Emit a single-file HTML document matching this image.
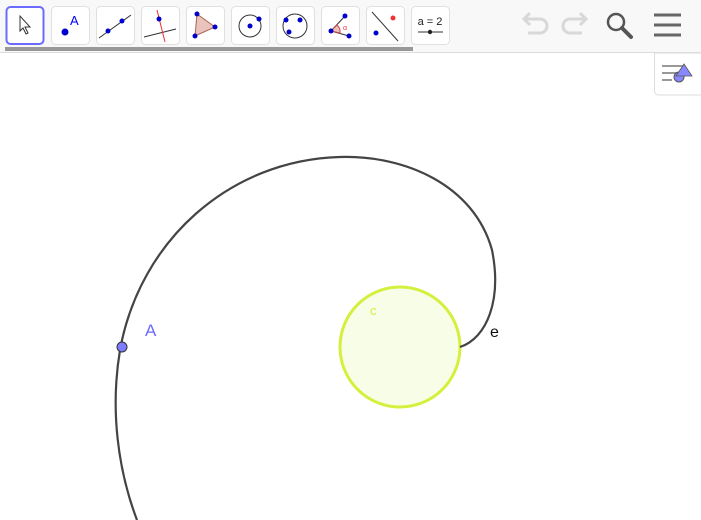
<!DOCTYPE html>
<html><head><style>
html,body{margin:0;padding:0;width:701px;height:520px;overflow:hidden;background:#fff;font-family:"Liberation Sans",sans-serif}
</style></head><body>
<svg width="701" height="520" style="position:absolute;left:0;top:0" xmlns="http://www.w3.org/2000/svg">
<rect x="0" y="0" width="701" height="52" fill="#f8f8f8"/>
<line x1="0" y1="52.5" x2="701" y2="52.5" stroke="#dcdcdc"/>
<rect x="5" y="47" width="408" height="4" fill="#999"/>
<g fill="#fff" stroke="#e0e0e0">
<rect x="51.5" y="6.5" width="38" height="38" rx="4"/>
<rect x="96.5" y="6.5" width="38" height="38" rx="4"/>
<rect x="141.5" y="6.5" width="38" height="38" rx="4"/>
<rect x="186.5" y="6.5" width="38" height="38" rx="4"/>
<rect x="231.5" y="6.5" width="38" height="38" rx="4"/>
<rect x="276.5" y="6.5" width="38" height="38" rx="4"/>
<rect x="321.5" y="6.5" width="38" height="38" rx="4"/>
<rect x="366.5" y="6.5" width="38" height="38" rx="4"/>
<rect x="411.5" y="6.5" width="38" height="38" rx="4"/>
</g>
<rect x="6.5" y="7" width="37" height="37" rx="4" fill="#fff" stroke="#6b6bff" stroke-width="2"/>
<path d="M20,16 L20,31 L23,28 L26,34 L28,33 L25,27 L30,27 Z" fill="#fff" stroke="#333" stroke-width="1"/>
<circle cx="65" cy="32" r="3.5" fill="#00c"/>
<text x="70" y="25" font-size="13" fill="#00f">A</text>
<line x1="99" y1="38" x2="131" y2="15" stroke="#333"/>
<circle cx="108" cy="31" r="2.5" fill="#00c"/><circle cx="122" cy="21" r="2.5" fill="#00c"/>
<line x1="144" y1="37" x2="176" y2="29" stroke="#333"/>
<line x1="157" y1="10" x2="165" y2="42" stroke="#e33"/>
<circle cx="159" cy="19" r="2.5" fill="#00c"/>
<polygon points="197,14 215,27 195,36" fill="#e8c4bc" stroke="#b06050"/>
<circle cx="197" cy="14" r="2.5" fill="#00c"/><circle cx="215" cy="27" r="2.5" fill="#00c"/><circle cx="195" cy="36" r="2.5" fill="#00c"/>
<circle cx="250" cy="26" r="11" fill="none" stroke="#333"/>
<circle cx="250" cy="26" r="2.5" fill="#00c"/><circle cx="259" cy="19" r="2.5" fill="#00c"/>
<ellipse cx="295" cy="26" rx="12" ry="12" fill="none" stroke="#333"/>
<circle cx="286" cy="20" r="2.5" fill="#00c"/><circle cx="300" cy="20" r="2.5" fill="#00c"/><circle cx="289" cy="32" r="2.5" fill="#00c"/>
<path d="M331,31 L345,16 M331,31 L349,36" stroke="#333" fill="none"/>
<path d="M331,31 L337,25 A9,9 0 0 1 340,33 Z" fill="#e8c4bc" stroke="#c44"/>
<text x="343" y="30" font-size="7" fill="#e33">α</text>
<circle cx="345" cy="16" r="2.5" fill="#00c"/><circle cx="331" cy="31" r="2.5" fill="#00c"/><circle cx="349" cy="36" r="2.5" fill="#00c"/>
<line x1="372" y1="12" x2="398" y2="41" stroke="#333"/>
<circle cx="393" cy="18" r="2.5" fill="#e33"/><circle cx="376" cy="33" r="2.5" fill="#00c"/>
<text x="430" y="25" font-size="11" fill="#222" text-anchor="middle">a = 2</text>
<line x1="418" y1="32" x2="443" y2="32" stroke="#333"/>
<circle cx="430" cy="32" r="2.2" fill="#222"/>
<g fill="none" stroke="#d8d8d8" stroke-width="3">
<path d="M526,19 H540 A7,7 0 0 1 540,33 H528"/>
<path d="M530,13 L524,19 L530,25"/>
<path d="M584,19 H570 A7,7 0 0 0 570,33 H582"/>
<path d="M580,13 L586,19 L580,25"/>
</g>
<circle cx="616" cy="22" r="8" fill="none" stroke="#555" stroke-width="2.5"/>
<line x1="622" y1="28" x2="631" y2="37" stroke="#555" stroke-width="4" stroke-linecap="round"/>
<g stroke="#666" stroke-width="3"><line x1="654" y1="15" x2="681" y2="15"/><line x1="654" y1="25" x2="681" y2="25"/><line x1="654" y1="35" x2="681" y2="35"/></g>
<path d="M701,53 H654.5 V91 a4,4 0 0 0 4,4 H701" fill="#fff" stroke="#ddd"/>
<g stroke="#999" stroke-width="2"><line x1="662" y1="66" x2="684" y2="66"/><line x1="662" y1="73" x2="678" y2="73"/><line x1="662" y1="80" x2="672" y2="80"/></g>
<circle cx="679" cy="77" r="5" fill="#8888ff" stroke="#555"/>
<polygon points="684,64 692,76 676,76" fill="#8888ff" stroke="#555" stroke-width="0.8"/>
<circle cx="400" cy="347" r="60" fill="#f8fde8" stroke="#d4f03c" stroke-width="3"/>
<text x="370" y="315" font-size="13" fill="#d4f03c">c</text>
<path d="M460,347 C487,338 502,300 492,250 C474,185 405,155 340,157 C230,160 140,240 120,350 C110,410 118,470 137,520" fill="none" stroke="#444" stroke-width="2.2"/>
<text x="490" y="337" font-size="16" fill="#111">e</text>
<circle cx="122" cy="347" r="5" fill="#7d7dff" stroke="#333" stroke-width="1"/>
<text x="145" y="336" font-size="17" fill="#6b6bff">A</text>
</svg>
</body></html>
